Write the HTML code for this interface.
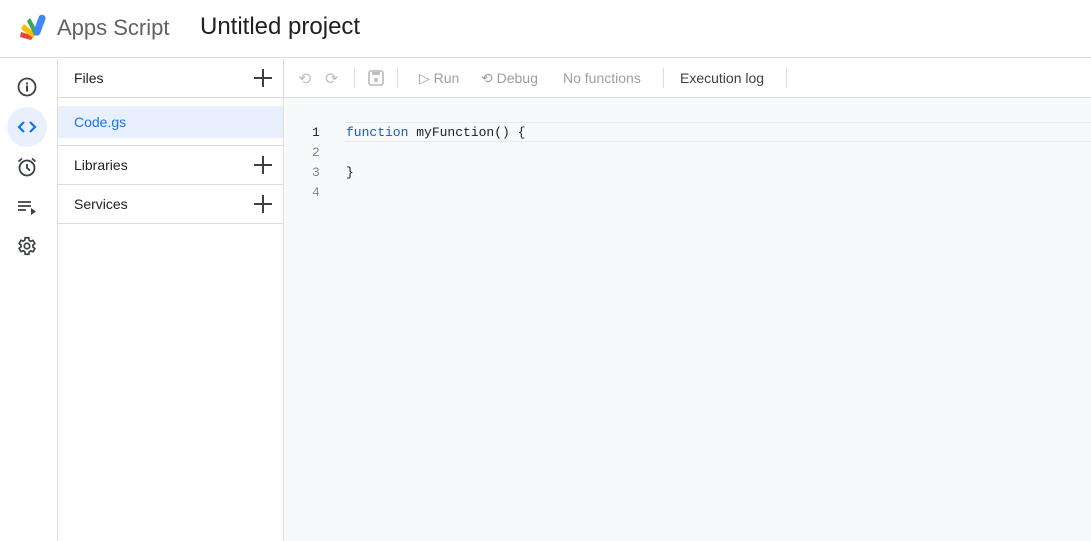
<!DOCTYPE html>
<html><head><style>
*{box-sizing:border-box;margin:0;padding:0}
body{width:1091px;height:541px;overflow:hidden;background:#fff;font-family:"Liberation Sans",sans-serif;color:#3c4043;position:relative}
.a{position:absolute}
.hdr{left:0;top:0;width:1091px;height:58px;border-bottom:1px solid #dadce0}
.side{left:0;top:59px;width:58px;height:482px;border-right:1px solid #dadce0}
.files{left:58px;top:59px;width:226px;height:482px;border-right:1px solid #dadce0}
.row{position:absolute;left:0;width:225px;border-bottom:1px solid #dadce0;font-size:14px;color:#202124;padding-left:16px}
.plus{position:absolute;right:11px;top:50%;width:18px;height:18px;margin-top:-9px}
.plus:before{content:"";position:absolute;left:8px;top:0;width:1.6px;height:18px;background:#3c4043}
.plus:after{content:"";position:absolute;top:8px;left:0;width:18px;height:1.6px;background:#3c4043}
.tb{left:284px;top:59px;width:807px;height:39px;border-bottom:1px solid #dadce0;font-size:14px}
.ed{left:285px;top:98px;width:806px;height:443px;background:#f8f9fa}
.code{font-family:"Liberation Mono",monospace;font-size:13px}
.vs{position:absolute;top:9px;width:1px;height:20px;background:#dadce0}
</style></head><body>
<div class="a hdr">
<svg class="a" style="left:18px;top:12px" width="34" height="28" viewBox="0 0 34 28">
<path d="M3 20 L16 24 L13 28 L2 25Z" fill="#ea4335"/>
<path d="M6 12 L18 22 L15 26 L3 17Z" fill="#fbbc04"/>
<path d="M12 6 L20 20 L16 23 L9 9Z" fill="#34a853"/>
<rect x="18" y="2" width="7" height="22" rx="3.5" transform="rotate(20 21 13)" fill="#4285f4"/>
</svg>
<div class="a" style="left:57px;top:15px;font-size:22px;color:#5f6368">Apps Script</div>
<div class="a" style="left:200px;top:13px;font-size:24px;color:#202124">Untitled project</div>
</div>
<div class="a side">
<svg class="a" style="left:17px;top:18px" width="20" height="20" viewBox="0 0 20 20"><circle cx="10" cy="10" r="8.5" fill="none" stroke="#3c4043" stroke-width="1.8"/><rect x="9" y="8.5" width="2" height="6" fill="#3c4043"/><rect x="9" y="5.5" width="2" height="2" fill="#3c4043"/></svg>
<div class="a" style="left:7px;top:48px;width:40px;height:40px;border-radius:50%;background:#e8f0fe"></div>
<svg class="a" style="left:16px;top:60px" width="22" height="16" viewBox="0 0 22 16"><path d="M8 3 L3 8 L8 13 M14 3 L19 8 L14 13" fill="none" stroke="#1a73e8" stroke-width="2.2"/></svg>
<svg class="a" style="left:16px;top:97px" width="22" height="22" viewBox="0 0 22 22"><circle cx="11" cy="12" r="7.5" fill="none" stroke="#3c4043" stroke-width="1.8"/><path d="M11 8 V12 L14 14.5 M2.5 5.5 L6 2.5 M19.5 5.5 L16 2.5" fill="none" stroke="#3c4043" stroke-width="1.8"/></svg>
<svg class="a" style="left:17px;top:141px" width="22" height="16" viewBox="0 0 22 16"><path d="M1 2H14M1 6H14M1 10H9" stroke="#3c4043" stroke-width="1.8"/><path d="M14 8 L19 11.5 L14 15Z" fill="#3c4043"/></svg>
<svg class="a" style="left:16px;top:176px" width="22" height="22" viewBox="0 0 24 24"><path d="M19.4 13a7.5 7.5 0 000-2l2.1-1.6-2-3.5-2.5 1a7 7 0 00-1.7-1L15 3h-4l-.4 2.7a7 7 0 00-1.7 1l-2.5-1-2 3.5L6.5 11a7.5 7.5 0 000 2l-2.1 1.6 2 3.5 2.5-1a7 7 0 001.7 1L11 21h4l.4-2.7a7 7 0 001.7-1l2.5 1 2-3.5z" fill="none" stroke="#3c4043" stroke-width="1.8" transform="translate(-1 0)"/><circle cx="12" cy="12" r="3" fill="none" stroke="#3c4043" stroke-width="1.8"/></svg>
</div>
<div class="a files">
<div class="row" style="top:0;height:39px;line-height:38px">Files<span class="plus"></span></div>
<div class="a" style="left:0;top:47px;width:225px;height:32px;background:#e8f0fe;color:#1a73e8;font-size:14px;line-height:32px;padding-left:16px">Code.gs</div>
<div class="a" style="left:0;top:86px;width:225px;border-bottom:1px solid #dadce0"></div>
<div class="row" style="top:87px;height:39px;line-height:38px">Libraries<span class="plus"></span></div>
<div class="row" style="top:126px;height:39px;line-height:38px">Services<span class="plus"></span></div>
</div>
<div class="a tb">
<div class="a" style="left:14px;top:10px;color:#bdc1c6;font-size:16px">⟲</div>
<div class="a" style="left:41px;top:10px;color:#bdc1c6;font-size:16px">⟳</div>
<div class="vs" style="left:70px"></div>
<svg class="a" style="left:84px;top:11px" width="16" height="16" viewBox="0 0 16 16"><rect x="1" y="1" width="14" height="14" rx="2" fill="none" stroke="#bdc1c6" stroke-width="1.8"/><rect x="4" y="2" width="8" height="3" fill="#bdc1c6"/><circle cx="8" cy="10" r="2" fill="#bdc1c6"/></svg>
<div class="vs" style="left:113px"></div>
<div class="a" style="left:135px;top:11px;color:#9aa0a6">▷ Run</div>
<div class="a" style="left:197px;top:11px;color:#9aa0a6">⟲ Debug</div>
<div class="a" style="left:279px;top:11px;color:#9aa0a6">No functions</div>
<div class="vs" style="left:379px"></div>
<div class="a" style="left:396px;top:11px;color:#3c4043">Execution log</div>
<div class="vs" style="left:502px"></div>
</div>
<div class="a ed">
<div class="a" style="left:60px;top:24px;width:746px;height:20px;border-top:1px solid #e8eaed;border-bottom:1px solid #e8eaed"></div>
<div class="a code" style="left:27px;top:27px;color:#202124">1</div>
<div class="a code" style="left:27px;top:47px;color:#80868b">2</div>
<div class="a code" style="left:27px;top:67px;color:#80868b">3</div>
<div class="a code" style="left:27px;top:87px;color:#80868b">4</div>
<div class="a code" style="left:61px;top:27px;color:#202124"><span style="color:#1a5fb4">function</span> myFunction() {</div>
<div class="a code" style="left:61px;top:67px;color:#202124">}</div>
</div>
</body></html>
